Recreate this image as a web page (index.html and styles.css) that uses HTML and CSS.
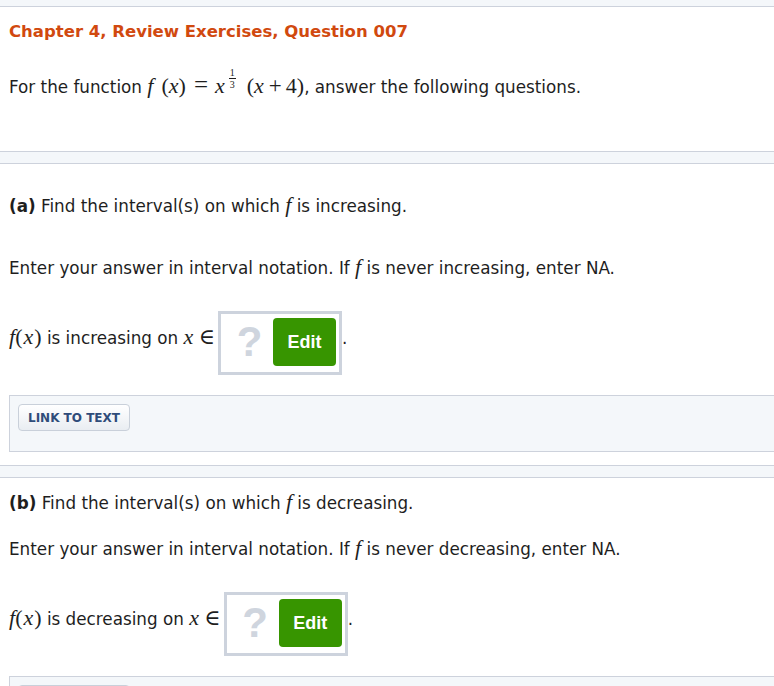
FILE: index.html
```html
<!DOCTYPE html>
<html>
<head>
<meta charset="utf-8">
<link rel="stylesheet" href="styles.css">
</head>
<body>
<div class="page">
  <section class="sec sec-intro">
    <h1 class="title">Chapter 4, Review Exercises, Question 007</h1>
    <p class="line stmt">For the function <span class="m"><span class="i fn">f</span>(<span class="i">x</span>)<span class="op eq">=</span><span class="i">x</span><span class="frac"><span class="num">1</span><span class="bar"></span><span class="den">3</span></span>(<span class="i">x</span><span class="op pl">+</span>4)</span>, answer the following questions.</p>
  </section>

  <section class="sec sec-a">
    <p class="line qa"><b>(a)</b> Find the interval(s) on which <span class="m i">f</span> is increasing.</p>
    <p class="line qe">Enter your answer in interval notation. If <span class="m i">f</span> is never increasing, enter NA.</p>
    <div class="answer-row">
      <span class="answer-text"><span class="m"><span class="i">f</span>(<span class="i xa">x</span>)</span> is increasing on <span class="m i">x</span> <span class="m">∈</span></span>
      <span class="answer-box"><span class="qmark">?</span><span class="edit">Edit</span></span>
      <span class="answer-text">.</span>
    </div>
    <div class="link-box"><span class="link-btn">LINK TO TEXT</span></div>
  </section>

  <section class="sec sec-b">
    <p class="line qb"><b>(b)</b> Find the interval(s) on which <span class="m i">f</span> is decreasing.</p>
    <p class="line qe2">Enter your answer in interval notation. If <span class="m i">f</span> is never decreasing, enter NA.</p>
    <div class="answer-row">
      <span class="answer-text"><span class="m"><span class="i">f</span>(<span class="i xa">x</span>)</span> is decreasing on <span class="m i">x</span> <span class="m">∈</span></span>
      <span class="answer-box"><span class="qmark">?</span><span class="edit">Edit</span></span>
      <span class="answer-text">.</span>
    </div>
    <div class="link-box"><span class="link-btn">LINK TO TEXT</span></div>
  </section>
</div>
</body>
</html>
```

FILE: styles.css
```css
html, body {
  margin: 0;
  padding: 0;
}
body {
  background: #f4f7fa;
  font-family: "DejaVu Sans", Verdana, sans-serif;
  color: #1e1e1e;
}
.page {
  padding-top: 6px;
}
.sec {
  background: #ffffff;
  border-top: 1px solid #cdd2dc;
  border-bottom: 1px solid #cdd2dc;
  margin-bottom: 11px;
  padding-left: 9px;
}
.sec-intro {
  padding-top: 15px;
  padding-bottom: 54px;
}
.sec-a {
  padding-top: 32px;
  padding-bottom: 13px;
}
.sec-b {
  padding-top: 15px;
  padding-bottom: 13px;
}
.title {
  margin: 0;
  font-size: 16.5px;
  line-height: 20px;
  font-weight: bold;
  color: #d1490f;
}
.line {
  margin: 0;
  font-size: 16.8px;
  line-height: 20px;
}
.stmt { margin-top: 35px; }
.qe { margin-top: 42px; }
.qe2 { margin-top: 26px; }
.m {
  font-family: "Liberation Serif", "DejaVu Serif", serif;
  font-size: 22px;
  line-height: 0;
}
.i { font-style: italic; }
.fn { margin-right: 8px; }
.xa { margin: 0 1px 0 1px; }
.op { display: inline-block; }
.eq { font-size: 25px; margin: 0 7px 0 8px; }
.pl { font-size: 23px; margin: 0 4px 0 5px; }
.frac {
  display: inline-flex;
  flex-direction: column;
  align-items: center;
  font-family: "Liberation Serif", serif;
  font-size: 10px;
  line-height: 9px;
  vertical-align: 17px;
  margin: -20px 10px 0 3px;
  padding: 0 1px;
}
.bar {
  width: 7px;
  height: 0;
  border-top: 1px solid #1e1e1e;
  margin: 1px 0;
}
.answer-row {
  display: flex;
  align-items: center;
  height: 64px;
  margin-top: 33px;
  font-size: 16.8px;
  line-height: 20px;
}
.answer-text {
  margin-bottom: 11px;
  white-space: pre;
}
.answer-box {
  display: flex;
  box-sizing: border-box;
  width: 124px;
  height: 64px;
  border: 3px solid #cdd3dd;
  padding: 4px 3px 6px 0;
  margin-left: 3px;
  margin-right: 0;
  background: #fff;
}
.qmark {
  width: 52px;
  display: flex;
  align-items: center;
  justify-content: center;
  padding-left: 5px;
  box-sizing: border-box;
  font-family: "Liberation Sans", Arial, sans-serif;
  font-weight: bold;
  font-size: 42px;
  color: #cfd5de;
}
.edit {
  flex: 1;
  display: flex;
  align-items: center;
  justify-content: center;
  background: #379500;
  border-radius: 4px;
  color: #fff;
  font-family: "Liberation Sans", Arial, sans-serif;
  font-weight: bold;
  font-size: 18px;
}
.link-box {
  margin-top: 20px;
  background: #f4f7fa;
  border: 1px solid #cdd2dc;
  border-right: none;
  padding: 8px 0 20px 8px;
}
.link-btn {
  display: inline-flex;
  align-items: center;
  justify-content: center;
  box-sizing: border-box;
  width: 112px;
  height: 27px;
  border: 1px solid #c9d0da;
  border-radius: 4px;
  background: linear-gradient(#ffffff, #e9edf2);
  font-size: 12px;
  font-weight: bold;
  color: #2f4c7a;
  vertical-align: top;
}
```
